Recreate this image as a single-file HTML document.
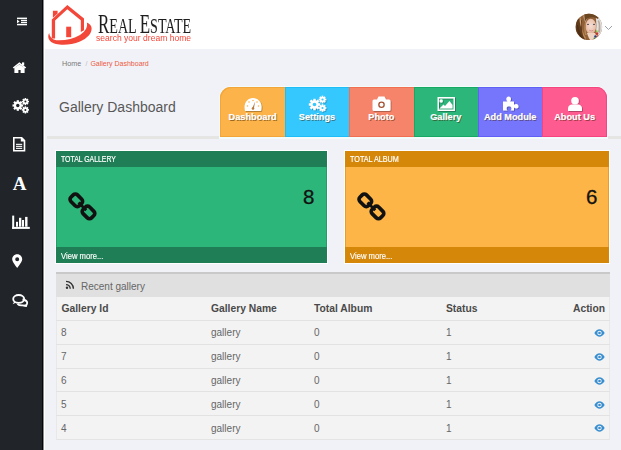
<!DOCTYPE html>
<html><head><meta charset="utf-8">
<style>
*{margin:0;padding:0;box-sizing:border-box}
html,body{width:621px;height:450px;overflow:hidden;background:#f1f2f7;font-family:"Liberation Sans",sans-serif;position:relative}
.abs{position:absolute}
#side{left:0;top:0;width:42px;height:450px;background:#212529}
#sideb1{left:42px;top:0;width:1px;height:450px;background:#050607}
#sideb2{left:43px;top:0;width:1px;height:450px;background:#8a8d90}
#sideb3{left:44px;top:0;width:1px;height:450px;background:#fff}
#header{left:44px;top:0;width:577px;height:49px;background:#fff}
.t{position:absolute;white-space:nowrap;line-height:1}
#rule{left:47px;top:136px;width:574px;height:2.8px;background:#e5e5e4}
.tab{position:absolute;top:87px;height:50px;width:64.5px}
.tl{position:absolute;left:0;width:64.4px;top:113.2px;text-align:center;color:#fff;font-weight:bold;font-size:9.2px;line-height:1;text-shadow:1px 1px 0.5px rgba(60,30,0,.5);-webkit-text-stroke:0.2px #fff}
.box{position:absolute;top:151px;height:112px}
.hd{position:absolute;left:0;right:0;top:0;height:16px}
.ft{position:absolute;left:0;right:0;top:96px;height:16px}
.cell{position:absolute;font-size:10px;color:#666;white-space:nowrap;line-height:1}
.th{position:absolute;font-size:10.3px;color:#4a4a4a;font-weight:bold;white-space:nowrap;line-height:1}
.hr{position:absolute;left:56px;width:554px;height:1px;background:#e2e2e2}
</style></head><body>
<div class="abs" id="side"></div>
<div class="abs" id="sideb1"></div>
<div class="abs" id="sideb2"></div>
<div class="abs" id="sideb3"></div>
<div class="abs" id="header"></div>

<!-- sidebar icons -->
<svg class="abs" style="left:0;top:0" width="42" height="450" viewBox="0 0 42 450">
 <g fill="#fff">
  <!-- indent -->
  <rect x="17" y="17.6" width="10" height="1.5"/>
  <rect x="21" y="19.8" width="6" height="1.3"/>
  <rect x="21" y="21.8" width="6" height="1.3"/>
  <rect x="17" y="23.8" width="10" height="1.5"/>
  <path d="M17 19.6 L19.6 21.4 L17 23.2Z"/>
  <!-- home -->
  <path d="M12.8 67.6 L19.4 62.2 L26.2 67.6 L25 68.6 L19.4 64.2 L13.9 68.6Z"/>
  <rect x="22" y="62.4" width="2.2" height="3"/>
  <path d="M14.4 67.8 L19.4 64.6 L24.6 67.8 V73 H20.6 V70 H18.4 V73 H14.4Z"/>
  <!-- cogs -->
  <g transform="translate(17.8 105.5)">
   <circle r="3.9"/>
   <g id="t8"><rect x="-1.1" y="-5.3" width="2.2" height="10.6"/><rect x="-5.3" y="-1.1" width="10.6" height="2.2"/>
   <rect x="-1.1" y="-5.3" width="2.2" height="10.6" transform="rotate(45)"/><rect x="-5.3" y="-1.1" width="10.6" height="2.2" transform="rotate(45)"/></g>
   <circle r="1.7" fill="#212529"/>
  </g>
  <g transform="translate(25.4 101.6)">
   <circle r="2.6"/>
   <rect x="-0.8" y="-3.6" width="1.6" height="7.2"/><rect x="-3.6" y="-0.8" width="7.2" height="1.6"/>
   <rect x="-0.8" y="-3.6" width="1.6" height="7.2" transform="rotate(45)"/><rect x="-3.6" y="-0.8" width="7.2" height="1.6" transform="rotate(45)"/>
   <circle r="1" fill="#212529"/>
  </g>
  <g transform="translate(25.4 109.9)">
   <circle r="2.6"/>
   <rect x="-0.8" y="-3.6" width="1.6" height="7.2"/><rect x="-3.6" y="-0.8" width="7.2" height="1.6"/>
   <rect x="-0.8" y="-3.6" width="1.6" height="7.2" transform="rotate(45)"/><rect x="-3.6" y="-0.8" width="7.2" height="1.6" transform="rotate(45)"/>
   <circle r="1" fill="#212529"/>
  </g>
  <!-- file-text -->
  <path d="M13 137 H22 L25.3 140.3 V151.6 H13Z M14.6 138.6 V150 H23.7 V141.5 H20.8 V138.6Z" fill-rule="evenodd"/>
  <rect x="16" y="143.8" width="6.2" height="1.1"/>
  <rect x="16" y="145.8" width="6.2" height="1.1"/>
  <rect x="16" y="147.8" width="6.2" height="1.1"/>
  <!-- bar chart -->
  <rect x="12.2" y="215.6" width="2" height="13.3"/>
  <rect x="12.2" y="226.9" width="17.6" height="2"/>
  <rect x="16" y="221.8" width="2" height="4.9"/>
  <rect x="19" y="217.8" width="2.3" height="8.9"/>
  <rect x="22" y="220" width="2" height="6.7"/>
  <rect x="25.1" y="216.9" width="2.4" height="9.8"/>
  <!-- map marker -->
  <path d="M17.2 254.3 C20 254.3 22.2 256.5 22.2 259.2 C22.2 261.5 19 265.5 17.2 267.9 C15.4 265.5 12.2 261.5 12.2 259.2 C12.2 256.5 14.4 254.3 17.2 254.3Z M17.2 257.2 A2 2 0 1 0 17.2 261.2 A2 2 0 1 0 17.2 257.2Z" fill-rule="evenodd"/>
 </g>
 <!-- font A -->
 <text x="19.5" y="190" font-family="Liberation Serif" font-weight="bold" font-size="19" fill="#fff" text-anchor="middle">A</text>
 <!-- comments -->
 <g fill="none" stroke="#fff" stroke-width="1.8">
  <path d="M22.5 299.5 C25.5 300 27.2 301.5 27.2 303 C27.2 304 26.5 305 25.5 305.3 L26.8 306.2 C25 306 23.5 305.6 22.8 305.4 C20.5 305.6 18.5 305 17.5 303.8"/>
  <ellipse cx="18.7" cy="298.9" rx="5.5" ry="3.9"/>
 </g>
 <path d="M14.2 301.8 L12.6 304.2 L16.2 302.6Z" fill="#fff"/>
</svg>
<!-- logo -->
<svg class="abs" style="left:44px;top:0" width="52" height="49" viewBox="44 0 52 49">
 <g fill="#f3473a">
  <path d="M51.8 19.5 L67.3 5 L84 18.6 L84 30.3 L80.8 32 L80.8 20.2 L67.3 9.2 L55.1 20.6 L55.1 38.4 L51.8 38.4Z"/>
  <path d="M52.9 10.7 H57.6 V13.5 L52.9 17.8Z"/>
  <rect x="66.2" y="26.7" width="5" height="10.5"/>
  <path d="M49.2 32.9 C46.8 37 49 42.5 56 44 C62 45.3 72 45 80 41.5 C87 38.5 92 33.5 91.6 28 C91.4 25.5 89.5 23.6 86.8 22.6 C87.8 26 86.5 31 80 35 C74 38.6 66 40.5 58 40.3 C53 40.1 49.8 37.5 49.2 32.9Z"/>
 </g>
</svg>
<div class="t" style="left:97.5px;top:11px;font-family:'Liberation Serif',serif;color:#1e1e1e;transform:scaleX(.64);transform-origin:0 0;-webkit-text-stroke:0.05px #1e1e1e"><span style="font-size:26.5px">R</span><span style="font-size:22px">EAL </span><span style="font-size:26.5px">E</span><span style="font-size:22px">STATE</span></div>
<div class="t" style="left:96px;top:33.5px;font-size:9px;color:#f3473a;transform:scaleX(.95);transform-origin:0 0">search your dream home</div>

<!-- avatar -->
<svg class="abs" style="left:575px;top:13.3px" width="28" height="28" viewBox="0 0 28 28">
 <defs>
  <clipPath id="cc"><circle cx="13.9" cy="13.9" r="13.2"/></clipPath>
  <radialGradient id="face" cx="0.5" cy="0.45" r="0.55"><stop offset="0" stop-color="#f5ddd3"/><stop offset="0.65" stop-color="#ecc7b5"/><stop offset="1" stop-color="#d9a886"/></radialGradient>
  <filter id="bl"><feGaussianBlur stdDeviation="0.5"/></filter>
 </defs>
 <g clip-path="url(#cc)">
  <rect width="28" height="28" fill="#8f6038"/>
  <g filter="url(#bl)">
  <path d="M20 2 H28 V28 H19 C21 22 22 14 21 6Z" fill="#e4e2e1"/>
  <path d="M22.5 8 C24 10 24 15 23 19 L25 20 C26 15 25.5 10 24 7Z" fill="#b9aaa0"/>
  <path d="M0 6 C2 4 5 5 7 8 C6 14 7 20 10 26 L9 28 H0Z" fill="#5e3a1c"/>
  <path d="M3 12 C4 16 5 21 8 25 L6 26 C3 22 2 17 2 12Z" fill="#4e2f16"/>
  <path d="M8.5 2.5 C10.5 1.5 12.5 2 13 4 C11.5 6 11 8 10.5 10 C9.5 8 8.5 5 8.5 2.5Z" fill="#e2c09a"/>
  <path d="M5 4 C6 6 6.5 10 6 14 C5 11 4 7 5 4Z" fill="#d0a474"/><path d="M7.5 16 C8 19 9 22 11 25 L10 26 C8 23 7 20 7.5 16Z" fill="#c08a58"/>
  <path d="M9 0 H23 C24 2 24 4 23 6 C20 4 16 3.5 13 5 C11 6 10 8 10 10Z" fill="#6a4424"/>
  <ellipse cx="15.8" cy="13.5" rx="5.4" ry="7.8" fill="url(#face)"/>
  <path d="M12 20 C13 24 15 27 16 28 H22 C22 25 21 22 20 20Z" fill="#efd3c3"/>
  <path d="M11 9 C11 13 10 18 12 22 L10 22 C9 18 9 13 10 9Z" fill="#b58455"/>
  </g>
  <ellipse cx="13" cy="11.4" rx="1.1" ry="0.6" fill="#5a5560"/>
  <ellipse cx="19" cy="11.4" rx="1.1" ry="0.6" fill="#5a5560"/>
  <path d="M14.2 17.2 Q16.3 18.8 18.4 17.2" stroke="#d98a88" stroke-width="0.9" fill="none"/>
  <circle cx="21.7" cy="18.2" r="1" fill="#8cc63f"/>
  <circle cx="22" cy="20.7" r="1.4" fill="#c0392b"/>
  <circle cx="20.5" cy="23.5" r="1.3" fill="#243f80"/>
  <circle cx="22.8" cy="23" r="0.9" fill="#e05a2a"/>
  <circle cx="21.5" cy="25.3" r="0.9" fill="#e0b020"/>
  <circle cx="19.3" cy="25.2" r="0.8" fill="#2a7a3a"/>
 </g>
</svg>
<svg class="abs" style="left:604px;top:25px" width="9" height="6" viewBox="0 0 9 6"><path d="M1 1 L4.5 4.5 L8 1" fill="none" stroke="#9aa3ad" stroke-width="1"/></svg>

<!-- breadcrumb + title -->
<div class="t" style="left:62px;top:60px;font-size:7.2px;color:#777">Home</div><div class="t" style="left:85.5px;top:60px;font-size:7px;color:#bbb">/</div><div class="t" style="left:90.4px;top:60px;font-size:7px;color:#ec5a42">Gallery Dashboard</div>
<div class="t" style="left:59px;top:100px;font-size:14px;color:#585858">Gallery Dashboard</div>
<div class="abs" id="rule"></div>
<!-- tabs -->
<div class="abs" style="left:219.3px;top:86px;width:388.6px;height:52.8px;border-radius:12px 12px 0 0;background:#f4fbfb"></div>
<div class="tab" style="left:220.4px;width:64.4px;background:#fbb34a;border-top-left-radius:11px;box-shadow:inset 1px 1px 0 #f2a63a,inset 0 -1px 0 #f2a63a"></div>
<div class="tab" style="left:284.8px;width:64.4px;background:#35c8fe;box-shadow:inset 1px 1px 0 #1fbdf8,inset 0 -1px 0 #1fbdf8"></div>
<div class="tab" style="left:349.2px;width:64.4px;background:#f5846b;box-shadow:inset 1px 1px 0 #f06e52,inset 0 -1px 0 #f06e52"></div>
<div class="tab" style="left:413.6px;width:64.4px;background:#2db67a;box-shadow:inset 1px 1px 0 #18a866,inset 0 -1px 0 #18a866"></div>
<div class="tab" style="left:478.0px;width:64.4px;background:#7676fd;box-shadow:inset 1px 1px 0 #6060f5,inset 0 -1px 0 #6060f5"></div>
<div class="tab" style="left:542.4px;width:64.4px;background:#fe5b90;border-top-right-radius:11px;box-shadow:inset 1px 1px 0 #f54580,inset 0 -1px 0 #f54580,inset -1px 0 0 #f54580"></div>
<div class="tl" style="left:220.4px">Dashboard</div>
<div class="tl" style="left:284.8px">Settings</div>
<div class="tl" style="left:349.2px">Photo</div>
<div class="tl" style="left:413.6px">Gallery</div>
<div class="tl" style="left:478.0px">Add Module</div>
<div class="tl" style="left:542.4px">About Us</div>
<svg class="abs" style="left:220px;top:87px" width="390" height="50" viewBox="220 87 390 50">
 <defs><filter id="sh" x="-20%" y="-20%" width="140%" height="140%"><feDropShadow dx="0.8" dy="0.8" stdDeviation="0.5" flood-color="#000" flood-opacity="0.35"/></filter></defs>
 <g fill="#fff" filter="url(#sh)">
  <!-- tachometer -->
  <path d="M245 111 C244.6 109.5 244.5 108.5 244.5 107 C244.5 102 248 98 253 98 C258 98 261.5 102 261.5 107 C261.5 108.5 261.4 109.5 261 111Z"/>
  <!-- cogs -->
  <g transform="translate(314.5 104.5)"><circle r="4.2"/>
   <rect x="-1.2" y="-5.7" width="2.4" height="11.4"/><rect x="-5.7" y="-1.2" width="11.4" height="2.4"/>
   <g transform="rotate(45)"><rect x="-1.2" y="-5.7" width="2.4" height="11.4"/><rect x="-5.7" y="-1.2" width="11.4" height="2.4"/></g></g>
  <g transform="translate(322.5 99.5)"><circle r="2.8"/>
   <rect x="-0.8" y="-3.8" width="1.6" height="7.6"/><rect x="-3.8" y="-0.8" width="7.6" height="1.6"/>
   <g transform="rotate(45)"><rect x="-0.8" y="-3.8" width="1.6" height="7.6"/><rect x="-3.8" y="-0.8" width="7.6" height="1.6"/></g></g>
  <g transform="translate(322.5 108)"><circle r="2.8"/>
   <rect x="-0.8" y="-3.8" width="1.6" height="7.6"/><rect x="-3.8" y="-0.8" width="7.6" height="1.6"/>
   <g transform="rotate(45)"><rect x="-0.8" y="-3.8" width="1.6" height="7.6"/><rect x="-3.8" y="-0.8" width="7.6" height="1.6"/></g></g>
  <!-- camera -->
  <path d="M374 99.5 H377 L378.5 96.5 H384.5 L386 99.5 H389 Q390.5 99.5 390.5 101 V109.5 Q390.5 111 389 111 H374 Q372.5 111 372.5 109.5 V101 Q372.5 99.5 374 99.5Z"/>
  <!-- picture -->
  <path d="M437.5 97 H455 V111 H437.5Z M439 98.5 V109.5 H453.5 V98.5Z" fill-rule="evenodd"/>
  <circle cx="441.2" cy="101" r="1.7"/>
  <path d="M439.5 108.5 L443.5 104.5 L445 106 L449.5 101 L452.5 105 V108.5Z"/>
  <!-- puzzle -->
  <path d="M503 101.5 H507.5 C506.5 100.5 506.3 99.7 506.3 99 C506.3 97.5 507.3 96.5 508.7 96.5 C510.1 96.5 511 97.5 511 99 C511 99.7 510.8 100.5 509.9 101.5 H514 V105 C514.9 104.2 515.6 104 516.3 104 C517.6 104 518.5 105 518.5 106.3 C518.5 107.6 517.6 108.6 516.3 108.6 C515.6 108.6 514.9 108.3 514 107.6 V110.5 H510.5 C511.2 109.6 511.4 109 511.4 108.4 C511.4 107.2 510.4 106.3 509 106.3 C507.6 106.3 506.6 107.2 506.6 108.4 C506.6 109 506.8 109.6 507.5 110.5 H503Z"/>
  <!-- user -->
  <circle cx="575" cy="100.8" r="3.8"/>
  <path d="M568 111 V108.3 C568 106 570 104.5 572.3 104.5 H577.7 C580 104.5 582 106 582 108.3 V111Z"/>
 </g>
 <!-- icon details (coloured holes) -->
 <g fill="#fbb34a"><circle cx="253" cy="100.5" r="0.8"/><circle cx="249" cy="102" r="0.8"/><circle cx="257" cy="102" r="0.8"/><circle cx="247.5" cy="106" r="0.8"/><circle cx="258.5" cy="106" r="0.8"/></g>
 <path d="M252.2 108.5 L255.2 101.5 L253.8 108.8Z" fill="#b5773a"/><circle cx="253" cy="108.5" r="1.3" fill="#b5773a"/>
 <g fill="#35c8fe"><circle cx="314.5" cy="104.5" r="1.8"/><circle cx="322.5" cy="99.5" r="1.1"/><circle cx="322.5" cy="108" r="1.1"/></g>
 <circle cx="381.5" cy="104.8" r="3.3" fill="#a3502f"/><circle cx="381.5" cy="104.8" r="2" fill="#fff"/>
</svg>
<!-- stat boxes -->
<div class="abs" style="left:55px;top:150px;width:273px;height:114px;background:#fff"></div>
<div class="box" style="left:56px;width:271px;background:#2db67a;border-left:1px solid #239e68;border-right:1px solid #239e68">
 <div class="hd" style="background:#207e56;left:-1px;right:-1px"></div>
 <div class="ft" style="background:#207e56;left:-1px;right:-1px"></div>
</div>
<div class="abs" style="left:344px;top:150px;width:266px;height:114px;background:#fff"></div>
<div class="box" style="left:345px;width:264px;background:#fcb546;border-left:1px solid #e69d2c;border-right:1px solid #e69d2c">
 <div class="hd" style="background:#d5870a;left:-1px;right:-1px"></div>
 <div class="ft" style="background:#d5870a;left:-1px;right:-1px"></div>
</div>
<div class="t" style="left:61px;top:154.8px;font-size:8.5px;color:#fff;transform:scaleX(.81);transform-origin:0 0;-webkit-text-stroke:0.2px #fff">TOTAL GALLERY</div>
<div class="t" style="left:350px;top:154.8px;font-size:8.5px;color:#fff;transform:scaleX(.85);transform-origin:0 0;-webkit-text-stroke:0.2px #fff">TOTAL ALBUM</div>
<div class="t" style="left:60.5px;top:252px;font-size:8.5px;color:#fff;transform:scaleX(.9);transform-origin:0 0;-webkit-text-stroke:0.15px #fff">View more...</div>
<div class="t" style="left:349.5px;top:252px;font-size:8.5px;color:#fff;transform:scaleX(.9);transform-origin:0 0;-webkit-text-stroke:0.15px #fff">View more...</div>
<div class="t" style="left:303px;top:187.3px;font-size:20.5px;color:#111;-webkit-text-stroke:0.3px #111">8</div>
<div class="t" style="left:586px;top:187.3px;font-size:20.5px;color:#111;-webkit-text-stroke:0.3px #111">6</div>
<svg class="abs" style="left:56px;top:180px" width="560" height="50" viewBox="56 180 560 50">
 <defs>
  <g id="lnk">
   <g transform="rotate(45) scale(1.05)" fill="none" stroke="#111" stroke-width="3.5">
    <rect x="-13.9" y="-4.4" width="11.4" height="8.8" rx="2.8"/>
    <rect x="2.5" y="-4.4" width="11.4" height="8.8" rx="2.8"/>
    <line x1="-5.2" y1="0" x2="5.2" y2="0" stroke-width="2.6"/>
   </g>
  </g>
 </defs>
 <use href="#lnk" x="82.4" y="206.4"/>
 <use href="#lnk" x="371.4" y="206.4"/>
</svg>

<!-- table panel -->
<div class="abs" style="left:56px;top:272px;width:554px;height:2px;background:#c9c9c9"></div>
<div class="abs" style="left:56px;top:274px;width:554px;height:23px;background:#e0e0e0"></div>
<div class="abs" style="left:56px;top:297px;width:554px;height:143px;background:#f3f3f3;border-left:1px solid #e8e8e8;border-right:1px solid #e8e8e8;border-bottom:1px solid #e4e4e4"></div>
<svg class="abs" style="left:64.5px;top:280px" width="10" height="10" viewBox="0 0 10 10">
 <circle cx="2" cy="7.8" r="1.2" fill="#333"/>
 <path d="M1 4.6 A4.2 4.2 0 0 1 5.2 8.8" fill="none" stroke="#333" stroke-width="1.4"/>
 <path d="M1 1.4 A7.4 7.4 0 0 1 8.4 8.8" fill="none" stroke="#333" stroke-width="1.4"/>
</svg>
<div class="t" style="left:81px;top:281.5px;font-size:10px;color:#666">Recent gallery</div>
<div class="th" style="left:61.5px;top:304.3px">Gallery Id</div>
<div class="th" style="left:211px;top:304.3px">Gallery Name</div>
<div class="th" style="left:314px;top:304.3px">Total Album</div>
<div class="th" style="left:446px;top:304.3px">Status</div>
<div class="th" style="left:573px;top:304.3px">Action</div>
<div class="hr" style="top:320px"></div>
<div class="hr" style="top:343.8px"></div>
<div class="hr" style="top:367.6px"></div>
<div class="hr" style="top:391.4px"></div>
<div class="hr" style="top:415.2px"></div>
<div class="cell" style="left:61px;top:328.3px">8</div>
<div class="cell" style="left:211px;top:328.3px">gallery</div>
<div class="cell" style="left:314px;top:328.3px">0</div>
<div class="cell" style="left:446px;top:328.3px">1</div>
<svg class="abs" style="left:594px;top:329.2px" width="11" height="8" viewBox="0 0 11 8"><path d="M0.3 4 C2 1.3 3.8 0.3 5.5 0.3 C7.2 0.3 9 1.3 10.7 4 C9 6.7 7.2 7.7 5.5 7.7 C3.8 7.7 2 6.7 0.3 4Z" fill="#3a8fd0"/><circle cx="5.5" cy="4" r="2.2" fill="#f3f3f3"/><circle cx="5.5" cy="4" r="1.3" fill="#3a8fd0"/></svg>
<div class="cell" style="left:61px;top:352.1px">7</div>
<div class="cell" style="left:211px;top:352.1px">gallery</div>
<div class="cell" style="left:314px;top:352.1px">0</div>
<div class="cell" style="left:446px;top:352.1px">1</div>
<svg class="abs" style="left:594px;top:353.0px" width="11" height="8" viewBox="0 0 11 8"><path d="M0.3 4 C2 1.3 3.8 0.3 5.5 0.3 C7.2 0.3 9 1.3 10.7 4 C9 6.7 7.2 7.7 5.5 7.7 C3.8 7.7 2 6.7 0.3 4Z" fill="#3a8fd0"/><circle cx="5.5" cy="4" r="2.2" fill="#f3f3f3"/><circle cx="5.5" cy="4" r="1.3" fill="#3a8fd0"/></svg>
<div class="cell" style="left:61px;top:375.9px">6</div>
<div class="cell" style="left:211px;top:375.9px">gallery</div>
<div class="cell" style="left:314px;top:375.9px">0</div>
<div class="cell" style="left:446px;top:375.9px">1</div>
<svg class="abs" style="left:594px;top:376.8px" width="11" height="8" viewBox="0 0 11 8"><path d="M0.3 4 C2 1.3 3.8 0.3 5.5 0.3 C7.2 0.3 9 1.3 10.7 4 C9 6.7 7.2 7.7 5.5 7.7 C3.8 7.7 2 6.7 0.3 4Z" fill="#3a8fd0"/><circle cx="5.5" cy="4" r="2.2" fill="#f3f3f3"/><circle cx="5.5" cy="4" r="1.3" fill="#3a8fd0"/></svg>
<div class="cell" style="left:61px;top:399.7px">5</div>
<div class="cell" style="left:211px;top:399.7px">gallery</div>
<div class="cell" style="left:314px;top:399.7px">0</div>
<div class="cell" style="left:446px;top:399.7px">1</div>
<svg class="abs" style="left:594px;top:400.6px" width="11" height="8" viewBox="0 0 11 8"><path d="M0.3 4 C2 1.3 3.8 0.3 5.5 0.3 C7.2 0.3 9 1.3 10.7 4 C9 6.7 7.2 7.7 5.5 7.7 C3.8 7.7 2 6.7 0.3 4Z" fill="#3a8fd0"/><circle cx="5.5" cy="4" r="2.2" fill="#f3f3f3"/><circle cx="5.5" cy="4" r="1.3" fill="#3a8fd0"/></svg>
<div class="cell" style="left:61px;top:423.5px">4</div>
<div class="cell" style="left:211px;top:423.5px">gallery</div>
<div class="cell" style="left:314px;top:423.5px">0</div>
<div class="cell" style="left:446px;top:423.5px">1</div>
<svg class="abs" style="left:594px;top:424.4px" width="11" height="8" viewBox="0 0 11 8"><path d="M0.3 4 C2 1.3 3.8 0.3 5.5 0.3 C7.2 0.3 9 1.3 10.7 4 C9 6.7 7.2 7.7 5.5 7.7 C3.8 7.7 2 6.7 0.3 4Z" fill="#3a8fd0"/><circle cx="5.5" cy="4" r="2.2" fill="#f3f3f3"/><circle cx="5.5" cy="4" r="1.3" fill="#3a8fd0"/></svg>
</body></html>
